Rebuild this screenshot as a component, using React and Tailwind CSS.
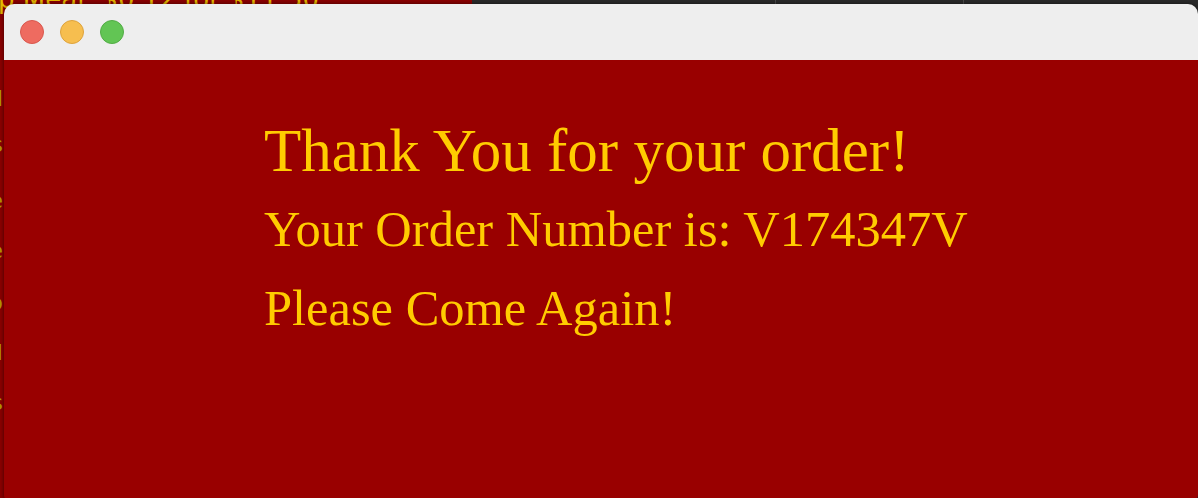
export default function App() {
  const bgLines = [
    { top: 88, text: "Total" },
    { top: 134, text: "Drinks" },
    { top: 190, text: "Price" },
    { top: 240, text: "Size" },
    { top: 292, text: "Combo" },
    { top: 342, text: "Meal" },
    { top: 392, text: "Sides" },
  ];
  return (
    <div className="relative w-[1198px] h-[498px] overflow-hidden bg-[#2a2a2a]">
      {/* background windows */}
      <div className="absolute left-[775px] top-0 w-px h-[6px] bg-[#4a4a4a]" />
      <div className="absolute left-[963px] top-0 w-px h-[6px] bg-[#4a4a4a]" />
      <div className="absolute left-0 top-0 w-[472px] h-full bg-[#8a0000] overflow-hidden">
        <div
          className="absolute left-[-2px] top-[-14px] whitespace-nowrap text-[26px] leading-none text-[#e6b800]"
          style={{ fontFamily: '"DejaVu Sans", sans-serif' }}
        >
          p Meal: $0.12 for $11.50
        </div>
        {bgLines.map((l) => (
          <div
            key={l.top}
            className="absolute right-[469px] whitespace-nowrap text-[22px] leading-none text-[#b89200]"
            style={{ top: l.top, fontFamily: '"DejaVu Sans", sans-serif' }}
          >
            {l.text}
          </div>
        ))}
      </div>

      {/* main window */}
      <div className="absolute left-[4px] top-[4px] w-[1194px] h-[500px] rounded-[10px] overflow-hidden flex flex-col shadow-[0_0_4px_rgba(0,0,0,0.55)]">
        <div className="h-[56px] shrink-0 bg-[#eeeeee] flex items-center pl-[16px] gap-[16px]">
          <div className="w-6 h-6 rounded-full bg-[#ee6b60] border border-[#d9574d]" />
          <div className="w-6 h-6 rounded-full bg-[#f6be4f] border border-[#dea33c]" />
          <div className="w-6 h-6 rounded-full bg-[#62c554] border border-[#52ac45]" />
        </div>
        <div
          className="flex-1 bg-[#990000] pl-[260px] text-[#ffcc00] flex flex-col items-start"
          style={{ fontFamily: '"Liberation Serif", "Times New Roman", serif' }}
        >
          <div className="mt-[60px] text-[61px] leading-none whitespace-nowrap">
            Thank You for your order!
          </div>
          <div className="mt-[23px] text-[50.5px] leading-none whitespace-nowrap">
            Your Order Number is: V174347V
          </div>
          <div className="mt-[28px] text-[50.5px] leading-none whitespace-nowrap">
            Please Come Again!
          </div>
        </div>
      </div>
    </div>
  );
}
